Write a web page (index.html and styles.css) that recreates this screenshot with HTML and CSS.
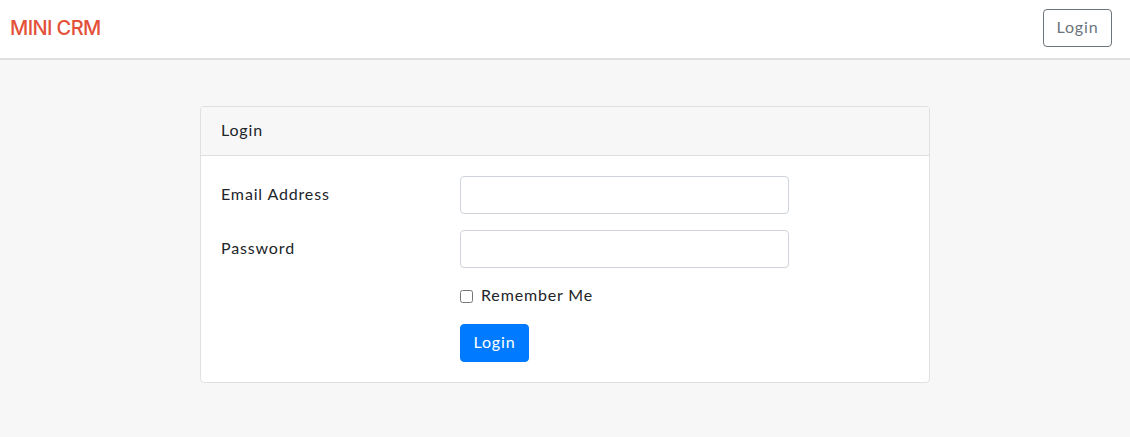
FILE: index.html
```html
<!DOCTYPE html>
<html lang="en">
<head>
    <meta charset="UTF-8">
    <meta name="viewport" content="width=device-width, initial-scale=1.0">
    <title>Mini CRM</title>
    <link rel="stylesheet" href="styles.css">
</head>
<body>
    <nav class="navbar">
        <a class="brand" href="#">MINI CRM</a>
        <a class="nav-login" href="#">Login</a>
    </nav>

    <main class="content">
        <div class="card">
            <div class="card-header">Login</div>
            <form class="card-body">
                <div class="form-row">
                    <label for="email">Email Address</label>
                    <input type="email" id="email" name="email">
                </div>
                <div class="form-row">
                    <label for="password">Password</label>
                    <input type="password" id="password" name="password">
                </div>
                <div class="form-row form-row-short">
                    <label class="remember">
                        <input type="checkbox" name="remember">
                        <span>Remember Me</span>
                    </label>
                </div>
                <div class="form-row form-row-last">
                    <button type="submit">Login</button>
                </div>
            </form>
        </div>
    </main>
</body>
</html>
```

FILE: styles.css
```css
* {
    box-sizing: border-box;
    margin: 0;
    padding: 0;
}

body {
    background: #f7f7f7;
    color: #212529;
    font-family: Lato, "Open Sans", sans-serif;
    font-size: 16px;
    letter-spacing: 0.85px;
    line-height: 24px;
    min-height: 100vh;
}

a {
    text-decoration: none;
}

.navbar {
    display: flex;
    justify-content: space-between;
    align-items: center;
    height: 60px;
    padding: 0 18px 2px 10px;
    background: white;
    border-bottom: 2px solid #e0e0e0;
}

.brand {
    color: #e3513a;
    font-family: Inter, sans-serif;
    font-size: 20px;
    font-weight: 500;
    letter-spacing: -0.6px;
}

.nav-login {
    display: block;
    width: 69px;
    height: 38px;
    padding: 5px 0 0;
    border: 1px solid #6c757d;
    border-radius: 4px;
    color: #6c757d;
    text-align: center;
}

.content {
    padding: 46px 200px 0;
}

.card {
    background: white;
    border: 1px solid #e0e0e0;
    border-radius: 4px;
    overflow: hidden;
}

.card-header {
    height: 49px;
    padding: 11px 20px;
    background: #f7f7f7;
    border-bottom: 1px solid #dfdfdf;
}

.card-body {
    display: flex;
    flex-direction: column;
    gap: 16px;
    padding: 20px;
}

.form-row {
    display: grid;
    grid-template-columns: 239px 329px;
    align-items: center;
    height: 38px;
}

.form-row > label {
    margin-top: -2px;
}

.form-row-short {
    height: 24px;
}

.form-row > input {
    height: 38px;
    border: 1px solid #ced4da;
    border-radius: 4px;
    background: white;
}

.form-row > .remember {
    grid-column: 2;
    display: flex;
    align-items: center;
    gap: 8px;
    height: 24px;
    margin-top: 0;
}

.remember span {
    margin-top: -2px;
}

.remember input {
    width: 13px;
    height: 13px;
}

.form-row-last button {
    grid-column: 2;
    justify-self: start;
    width: 69px;
    height: 38px;
    padding-bottom: 2px;
    background: #007bff;
    border: 1px solid #007bff;
    border-radius: 4px;
    color: white;
    font: inherit;
    letter-spacing: inherit;
}
```
